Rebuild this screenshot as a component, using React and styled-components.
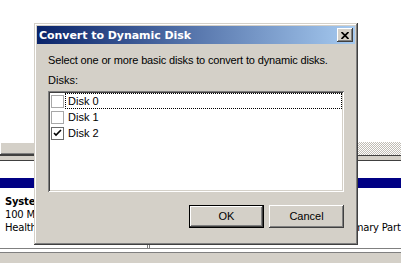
import React from "react";
import styled, { createGlobalStyle, css } from "styled-components";

const GlobalStyle = createGlobalStyle`
  html, body {
    margin: 0;
    padding: 0;
    background: #fff;
  }
  body {
    width: 401px;
    height: 263px;
    overflow: hidden;
    font-family: "Liberation Sans", Arial, sans-serif;
    font-size: 11px;
    color: #000;
  }
`;

const raised = css`
  box-shadow: inset -1px -1px #404040, inset 1px 1px #fff,
    inset -2px -2px #808080, inset 2px 2px #d4d0c8;
`;

const disks = [
  { name: "Disk 0", checked: false, focused: true },
  { name: "Disk 1", checked: false },
  { name: "Disk 2", checked: true },
];

function Check() {
  return (
    <svg width="9" height="9" viewBox="0 0 9 9">
      <path d="M1 4 L3 6 L8 1" stroke="#000" strokeWidth="1.6" fill="none" />
    </svg>
  );
}

function CloseGlyph() {
  return (
    <svg width="8" height="7" viewBox="0 0 8 7">
      <path d="M0.5 0 L7.5 7 M7.5 0 L0.5 7" stroke="#000" strokeWidth="1.7" />
    </svg>
  );
}

export default function App() {
  return (
    <>
      <GlobalStyle />
      <Screen>
        <TopPane />
        <ScrollBar>
          <Thumb />
          <Track />
        </ScrollBar>
        <Splitter />
        <DiskGap />
        <PartitionRow>
          <Partition>
            <PartHeader />
            <PartInfo>
              <PartName>System Reserved</PartName>
              <span>100 MB NTFS</span>
              <span>Healthy (System, Active, Primary Partition)</span>
            </PartInfo>
          </Partition>
          <Divider />
          <Partition>
            <PartHeader />
            <PartInfo>
              <PartName>(C:)</PartName>
              <span>39.90 GB NTFS</span>
              <span>Healthy (Boot, Page File, Crash Dump, Primary Partition)</span>
            </PartInfo>
          </Partition>
        </PartitionRow>
        <BottomBar />

        <Dialog>
          <TitleBar>
            <Title>Convert to Dynamic Disk</Title>
            <CloseButton>
              <CloseGlyph />
            </CloseButton>
          </TitleBar>
          <Body>
            <Prompt>Select one or more basic disks to convert to dynamic disks.</Prompt>
            <Label>Disks:</Label>
            <ListBox>
              {disks.map((d) => (
                <Row key={d.name}>
                  <Box $checked={d.checked}>{d.checked && <Check />}</Box>
                  <ItemText $focused={d.focused}>{d.name}</ItemText>
                </Row>
              ))}
            </ListBox>
            <Buttons>
              <Button $default>OK</Button>
              <Button>Cancel</Button>
            </Buttons>
          </Body>
        </Dialog>
      </Screen>
    </>
  );
}

const Screen = styled.div`
  position: relative;
  width: 401px;
  height: 263px;
  display: flex;
  flex-direction: column;
  background: #fff;
  font-family: "DejaVu Sans", Verdana, sans-serif;
  font-size: 10px;
`;

const TopPane = styled.div`
  height: 142px;
  background: #fff;
`;

const ScrollBar = styled.div`
  height: 13px;
  display: flex;
  background: #d4d0c8;
`;

const Thumb = styled.div`
  width: 220px;
  ${raised};
`;

const Track = styled.div`
  flex: 1;
  background-image: repeating-conic-gradient(#c0bcb4 0 25%, #fff 0 50%);
  background-size: 2px 2px;
`;

const Splitter = styled.div`
  height: 4px;
  background: #d4d0c8;
  border-top: 1px solid #404040;
  border-bottom: 1px solid #404040;
`;

const DiskGap = styled.div`
  height: 17px;
  background: #fff;
`;

const PartitionRow = styled.div`
  flex: 1;
  display: grid;
  grid-template-columns: 147px 3px 1fr;
  background: #fff;
  border-bottom: 1px solid #808080;
`;

const Partition = styled.div`
  display: flex;
  flex-direction: column;
  overflow: hidden;
  white-space: nowrap;
`;

const PartHeader = styled.div`
  height: 10px;
  background: #000084;
`;

const PartInfo = styled.div`
  display: flex;
  flex-direction: column;
  padding: 7px 0 0 5px;
  line-height: 13px;
  letter-spacing: -0.2px;
`;

const PartName = styled.span`
  font-weight: bold;
`;

const Divider = styled.div`
  background: #fff;
  border-left: 1px solid #808080;
  border-right: 1px solid #808080;
`;

const BottomBar = styled.div`
  height: 11px;
  background: #d4d0c8;
  border-top: 3px solid #fff;
  box-shadow: inset 0 1px #808080;
`;

const Dialog = styled.div`
  position: absolute;
  left: 34px;
  top: 23px;
  width: 324px;
  height: 222px;
  box-sizing: border-box;
  padding: 3px;
  background: #d4d0c8;
  box-shadow: inset -1px -1px #404040, inset 1px 1px #d4d0c8,
    inset -2px -2px #808080, inset 2px 2px #fff;
  display: flex;
  flex-direction: column;
  font-family: "Liberation Sans", Arial, sans-serif;
  font-size: 11px;
`;

const TitleBar = styled.div`
  height: 18px;
  display: flex;
  align-items: center;
  justify-content: space-between;
  padding: 0 2px 0 2px;
  background: linear-gradient(to right, #0a246a, #a6caf0);
`;

const Title = styled.span`
  color: #fff;
  font-family: "DejaVu Sans", Verdana, sans-serif;
  font-weight: bold;
  font-size: 11px;
  letter-spacing: -0.05px;
`;

const CloseButton = styled.div`
  width: 16px;
  height: 14px;
  display: flex;
  align-items: center;
  justify-content: center;
  background: #d4d0c8;
  ${raised};
`;

const Body = styled.div`
  display: flex;
  flex-direction: column;
  padding: 10px 11px 0 11px;
  line-height: 13px;
`;

const Prompt = styled.div`
  letter-spacing: -0.15px;
`;

const Label = styled.div`
  margin-top: 7px;
`;

const ListBox = styled.div`
  margin-top: 4px;
  height: 101px;
  box-sizing: border-box;
  padding: 2px 2px 2px 3px;
  background: #fff;
  box-shadow: inset 1px 1px #808080, inset -1px -1px #fff,
    inset 2px 2px #404040, inset -2px -2px #d4d0c8;
  display: flex;
  flex-direction: column;
`;

const Row = styled.div`
  height: 16px;
  display: flex;
  align-items: center;
`;

const Box = styled.div`
  width: 13px;
  height: 13px;
  box-sizing: border-box;
  border: 1px solid ${(p) => (p.$checked ? "#6a6a6a" : "#a8a8a8")};
  background: #fff;
  display: flex;
  align-items: center;
  justify-content: center;
`;

const ItemText = styled.div`
  flex: 1;
  height: 16px;
  box-sizing: border-box;
  margin-left: 1px;
  padding-left: 2px;
  line-height: 14px;
  border: 1px dotted ${(p) => (p.$focused ? "#000" : "transparent")};
`;

const Buttons = styled.div`
  margin-top: 13px;
  display: flex;
  justify-content: flex-end;
  gap: 5px;
`;

const Button = styled.div`
  width: 75px;
  height: 23px;
  box-sizing: border-box;
  display: flex;
  align-items: center;
  justify-content: center;
  background: #d4d0c8;
  ${raised};
  ${(p) =>
    p.$default &&
    css`
      border: 1px solid #000;
      box-shadow: inset -1px -1px #404040, inset 1px 1px #fff,
        inset -2px -2px #808080, inset 2px 2px #d4d0c8;
    `}
`;
